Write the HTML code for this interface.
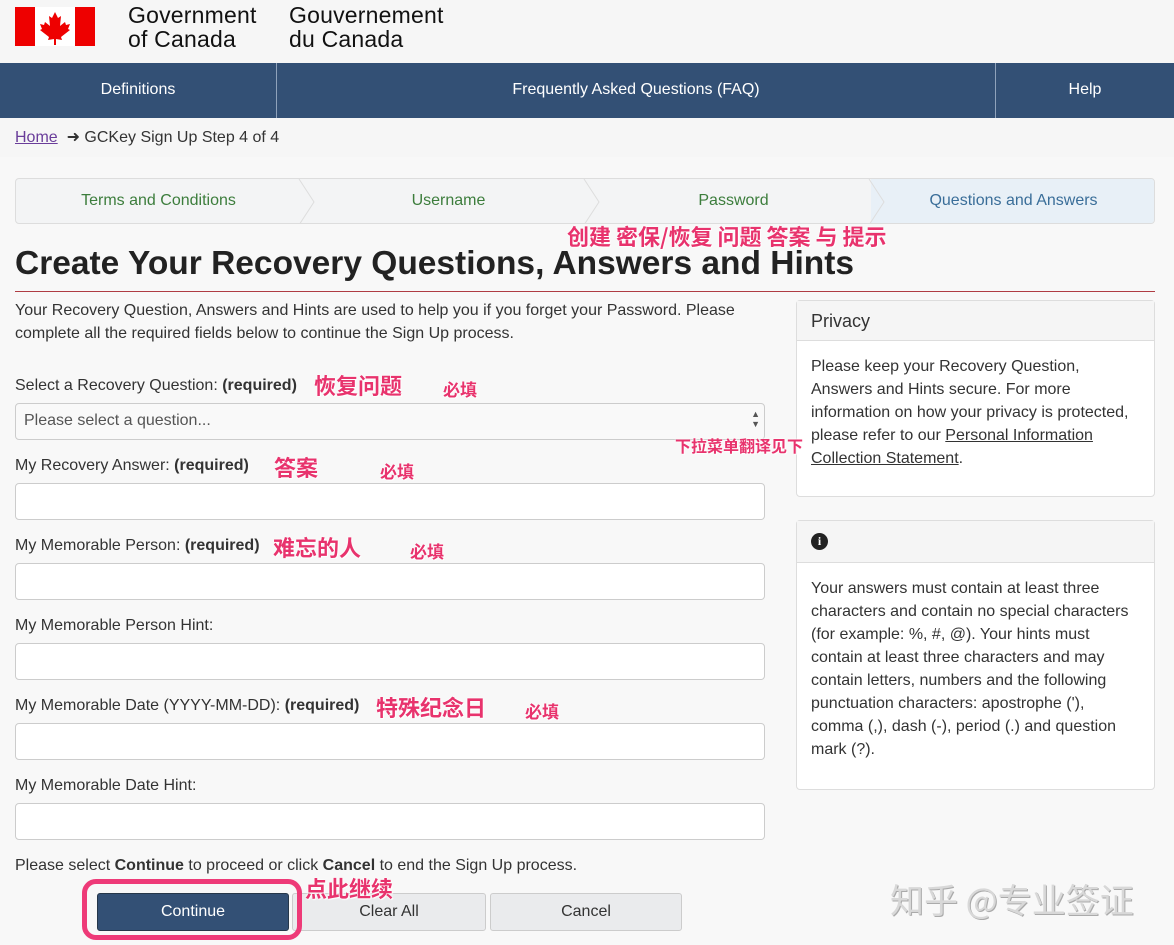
<!DOCTYPE html>
<html><head><meta charset="utf-8"><style>
*{box-sizing:border-box;margin:0;padding:0}
body{width:1174px;height:945px;background:#f6f6f6;font-family:"Liberation Sans","Noto Sans CJK SC",sans-serif;color:#333;position:relative;overflow:hidden;font-size:16px}
.a{position:absolute;white-space:nowrap}
.nav{position:absolute;top:63px;left:0;width:1174px;height:55px;background:#335075;color:#fff;font-size:16px}
.nav div{position:absolute;top:0;height:55px;line-height:54px;text-align:center;border-right:1px solid #8fa2bb}
.steps{position:absolute;top:178px;left:15px;width:1140px;height:46px;border:1px solid #ddd;border-radius:4px;background:#f3f4f5;overflow:hidden}
.steps div{position:absolute;top:0;height:44px;line-height:44px;text-align:center;color:#3c7d3c;font-size:16px}
.cn{position:absolute;white-space:nowrap;color:#e8336d;font-weight:bold;font-family:"Noto Sans CJK SC",sans-serif;text-shadow:0 0 2px #fff,0 0 2px #fff,1px 1px 1px #fff;z-index:5}
.inp{position:absolute;left:15px;width:750px;height:37px;background:#fff;border:1px solid #ccc;border-radius:4px}
.lbl{position:absolute;left:15px;white-space:nowrap;font-size:16px}
.panel{position:absolute;left:796px;width:359px;background:#fff;border:1px solid #ddd;border-radius:4px}
.ph{background:#f5f5f5;border-bottom:1px solid #ddd;padding:0 14px}
.pb{padding:14px 14px;line-height:23px;font-size:16px}
.btn{position:absolute;top:893px;height:38px;border:1px solid #ccc;border-radius:3px;background:#eaebed;text-align:center;line-height:36px;font-size:16px;color:#333}
</style></head><body>
<svg class="a" style="left:15px;top:7px" width="80" height="39" viewBox="0 0 80 39"><rect x="0" y="0" width="20" height="39" fill="#e00"/><rect x="60" y="0" width="20" height="39" fill="#e00"/><rect x="20" y="0" width="40" height="39" fill="#fff"/><path d="M40 5 L43 11 L46 9 L45 19 L50 15 L51 18 L55 17 L53 22 L55 23 L46 30 L47 33 L41 32 L41 38 L39 38 L39 32 L33 33 L34 30 L25 23 L27 22 L25 17 L29 18 L30 15 L35 19 L34 9 L37 11 Z" fill="#e00"/></svg>
<div class="a" style="left:128px;top:3px;font-size:23px;line-height:24px;color:#111;letter-spacing:0.2px">Government<br>of Canada</div>
<div class="a" style="left:289px;top:3px;font-size:23px;line-height:24px;color:#111;letter-spacing:0.2px">Gouvernement<br>du Canada</div>
<div class="nav"><div style="left:0;width:277px">Definitions</div><div style="left:277px;width:719px">Frequently Asked Questions (FAQ)</div><div style="left:996px;width:178px;border:none">Help</div></div>
<div class="a" style="left:15px;top:127px;font-size:16px"><span style="color:#6a3d9a;text-decoration:underline">Home</span> &nbsp;➜ GCKey Sign Up Step 4 of 4</div>
<div class="a" style="left:0;top:157px;width:1174px;height:788px;background:#f8f8f8;z-index:-1"></div>
<div class="steps">
<div style="left:0;width:285px">Terms and Conditions</div>
<div style="left:285px;width:295px">Username</div>
<div style="left:570px;width:295px">Password</div>
<div style="left:855px;width:285px;background:#e8f0f7;color:#3a6e99">Questions and Answers</div>
<svg style="position:absolute;left:0;top:0" width="1140" height="46"><g fill="none" stroke="#ddd"><path d="M283 0 L298 23 L283 46"/><path d="M568 0 L583 23 L568 46"/><path d="M853 0 L868 23 L853 46"/></g></svg>
</div>
<div class="cn" style="left:567px;top:220px;font-size:22px">创建 密保/恢复 问题 答案 与 提示</div>
<div class="a" style="left:15px;top:245px;font-size:33.5px;font-weight:bold;color:#222">Create Your Recovery Questions, Answers and Hints</div>
<div class="a" style="left:15px;top:291px;width:1140px;height:1px;background:#af3c43"></div>
<div class="a" style="left:15px;top:299px;line-height:23px;font-size:16px">Your Recovery Question, Answers and Hints are used to help you if you forget your Password. Please<br>complete all the required fields below to continue the Sign Up process.</div>
<div class="lbl" style="top:377px">Select a Recovery Question: <b>(required)</b></div>
<div class="cn" style="left:314px;top:369px;font-size:22px">恢复问题</div><div class="cn" style="left:443px;top:376px;font-size:17px">必填</div>
<div class="inp" style="top:403px;background:#f9f9f9;padding:8px 8px;color:#555">Please select a question...<span style="position:absolute;right:4px;top:5px;font-size:9px;line-height:10px">▲<br>▼</span></div>
<div class="cn" style="left:675px;top:433px;font-size:16px">下拉菜单翻译见下</div>
<div class="lbl" style="top:457px">My Recovery Answer: <b>(required)</b></div>
<div class="cn" style="left:274px;top:451px;font-size:22px">答案</div><div class="cn" style="left:380px;top:458px;font-size:17px">必填</div>
<div class="inp" style="top:483px"></div>
<div class="lbl" style="top:537px">My Memorable Person: <b>(required)</b></div>
<div class="cn" style="left:273px;top:531px;font-size:22px">难忘的人</div><div class="cn" style="left:410px;top:538px;font-size:17px">必填</div>
<div class="inp" style="top:563px"></div>
<div class="lbl" style="top:617px">My Memorable Person Hint:</div>
<div class="inp" style="top:643px"></div>
<div class="lbl" style="top:697px">My Memorable Date (YYYY-MM-DD): <b>(required)</b></div>
<div class="cn" style="left:376px;top:691px;font-size:22px">特殊纪念日</div><div class="cn" style="left:525px;top:698px;font-size:17px">必填</div>
<div class="inp" style="top:723px"></div>
<div class="lbl" style="top:777px">My Memorable Date Hint:</div>
<div class="inp" style="top:803px"></div>
<div class="lbl" style="top:857px">Please select <b>Continue</b> to proceed or click <b>Cancel</b> to end the Sign Up process.</div>
<div class="btn" style="left:292px;width:194px">Clear All</div>
<div class="btn" style="left:490px;width:192px">Cancel</div>
<div class="a" style="left:82px;top:879px;width:220px;height:61px;border:5px solid #ee3a78;border-radius:14px"></div>
<div class="btn" style="left:97px;width:192px;background:#335075;color:#fff;border-color:#26374a">Continue</div>
<div class="cn" style="left:305px;top:872px;font-size:22px">点此继续</div>
<div class="a" style="left:890px;top:874px;font-size:34px;color:#d8d8d8;font-family:'Noto Sans CJK SC',sans-serif;text-shadow:1px 1px 0 #aaa">知乎 @专业签证</div>
<div class="panel" style="top:300px;height:197px"><div class="ph" style="height:40px;line-height:40px;font-size:18px">Privacy</div><div class="pb" style="padding-top:14px">Please keep your Recovery Question, Answers and Hints secure. For more information on how your privacy is protected, please refer to our <u>Personal Information Collection Statement</u>.</div></div>
<div class="panel" style="top:520px;height:270px"><div class="ph" style="height:42px;padding-top:11px"><span style="display:inline-block;width:17px;height:17px;border-radius:50%;background:#222;color:#fff;font-size:12px;font-weight:bold;text-align:center;line-height:17px;font-family:'Liberation Serif',serif">i</span></div><div class="pb" style="padding-top:14px">Your answers must contain at least three characters and contain no special characters (for example: %, #, @). Your hints must contain at least three characters and may contain letters, numbers and the following punctuation characters: apostrophe ('), comma (,), dash (-), period (.) and question mark (?).</div></div>
</body></html>
